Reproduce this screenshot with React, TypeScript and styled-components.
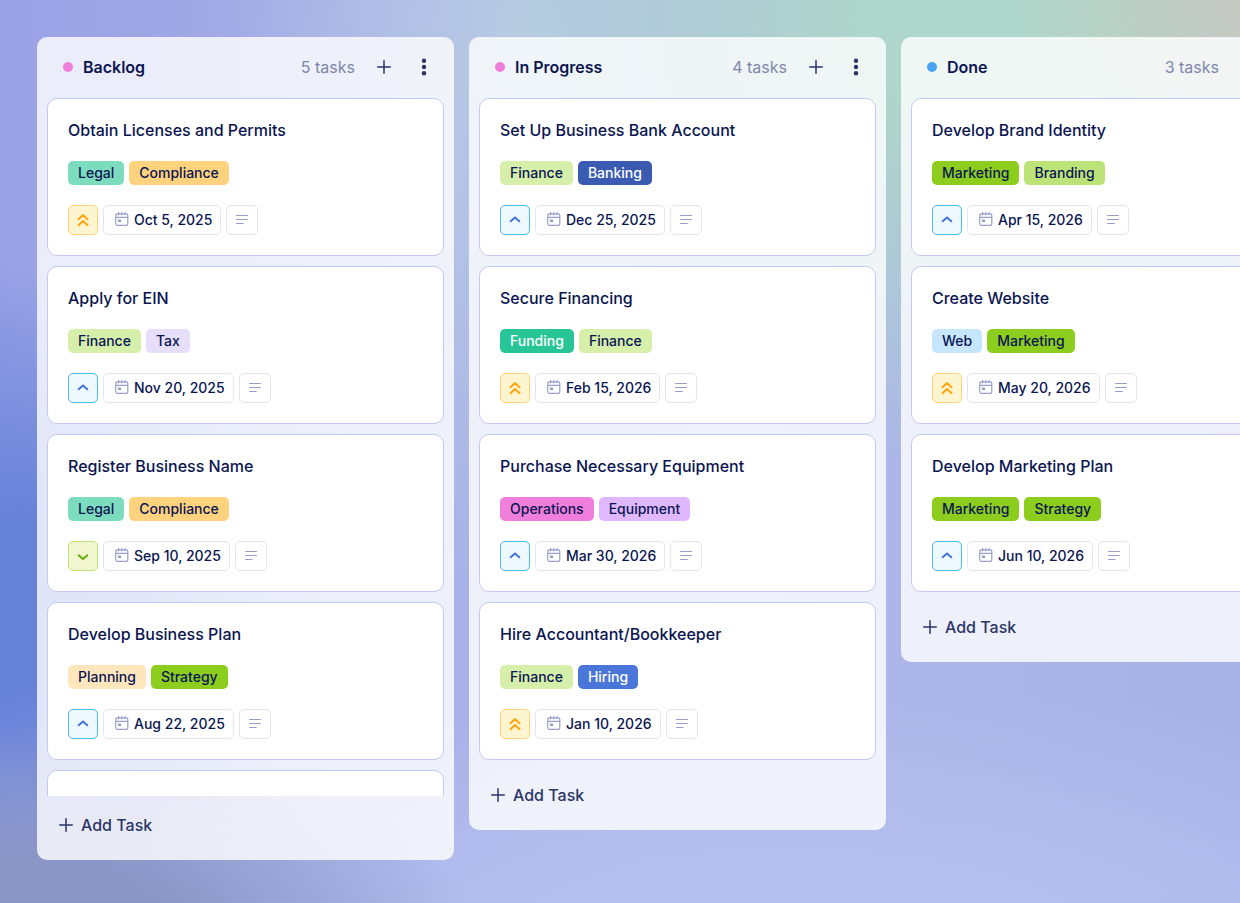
import React from "react";
import styled, { createGlobalStyle } from "styled-components";

const GlobalStyle = createGlobalStyle`
  *, *::before, *::after { box-sizing: border-box; }
  html, body { margin: 0; padding: 0; }
  body {
    font-family: "Inter", "Liberation Sans", sans-serif;
    color: #0a1551;
    overflow: hidden;
  }
  button { font-family: inherit; color: inherit; }
`;

type Priority = "high" | "medium" | "low";

interface Task {
  title: string;
  tags: string[];
  priority: Priority;
  date: string;
}

interface ColumnData {
  name: string;
  dot: string;
  count: number;
  tasks: Task[];
}

const tagColors: Record<string, { bg: string; fg?: string }> = {
  Legal: { bg: "#7edcbe" },
  Compliance: { bg: "#ffd27d" },
  Finance: { bg: "#d6efab" },
  Tax: { bg: "#e6defa" },
  Planning: { bg: "#ffe6bd" },
  Strategy: { bg: "#8dcd1e" },
  Banking: { bg: "#3a5bb1", fg: "#ffffff" },
  Funding: { bg: "#28c596", fg: "#ffffff" },
  Operations: { bg: "#f07edb" },
  Equipment: { bg: "#e0b8ff" },
  Hiring: { bg: "#4a76d9", fg: "#ffffff" },
  Marketing: { bg: "#8dcd1e" },
  Branding: { bg: "#bbe378" },
  Web: { bg: "#c6e5ff" },
};

const priorityColors: Record<Priority, { bg: string; border: string; icon: string }> = {
  high: { bg: "#fdf5cf", border: "#ffd27d", icon: "#ffa412" },
  medium: { bg: "#edf8ff", border: "#4db9fb", icon: "#4573e3" },
  low: { bg: "#f2f6ce", border: "#bbe378", icon: "#64ad12" },
};

const columns: ColumnData[] = [
  {
    name: "Backlog",
    dot: "#f07edb",
    count: 5,
    tasks: [
      { title: "Obtain Licenses and Permits", tags: ["Legal", "Compliance"], priority: "high", date: "Oct 5, 2025" },
      { title: "Apply for EIN", tags: ["Finance", "Tax"], priority: "medium", date: "Nov 20, 2025" },
      { title: "Register Business Name", tags: ["Legal", "Compliance"], priority: "low", date: "Sep 10, 2025" },
      { title: "Develop Business Plan", tags: ["Planning", "Strategy"], priority: "medium", date: "Aug 22, 2025" },
    ],
  },
  {
    name: "In Progress",
    dot: "#f07edb",
    count: 4,
    tasks: [
      { title: "Set Up Business Bank Account", tags: ["Finance", "Banking"], priority: "medium", date: "Dec 25, 2025" },
      { title: "Secure Financing", tags: ["Funding", "Finance"], priority: "high", date: "Feb 15, 2026" },
      { title: "Purchase Necessary Equipment", tags: ["Operations", "Equipment"], priority: "medium", date: "Mar 30, 2026" },
      { title: "Hire Accountant/Bookkeeper", tags: ["Finance", "Hiring"], priority: "high", date: "Jan 10, 2026" },
    ],
  },
  {
    name: "Done",
    dot: "#4aa3f2",
    count: 3,
    tasks: [
      { title: "Develop Brand Identity", tags: ["Marketing", "Branding"], priority: "medium", date: "Apr 15, 2026" },
      { title: "Create Website", tags: ["Web", "Marketing"], priority: "high", date: "May 20, 2026" },
      { title: "Develop Marketing Plan", tags: ["Marketing", "Strategy"], priority: "medium", date: "Jun 10, 2026" },
    ],
  },
];

const Board = styled.main`
  display: flex;
  align-items: flex-start;
  gap: 15px;
  min-height: 100vh;
  padding: 37px;
  overflow: hidden;
  background:
    radial-gradient(ellipse 38% 24% at 0% 104%, #8b96c6 35%, rgba(139, 150, 198, 0) 100%),
    radial-gradient(ellipse 26% 38% at 0% 67%, #6681d8 25%, rgba(102, 129, 216, 0) 100%),
    radial-gradient(ellipse 22% 22% at 104% 0%, #c6cac3 20%, rgba(198, 202, 195, 0) 100%),
    radial-gradient(ellipse 44% 50% at 80% 2%, #afd6ca 24%, rgba(175, 214, 202, 0) 100%),
    radial-gradient(ellipse 24% 60% at 42% 8%, #b7c8e5 10%, rgba(183, 200, 229, 0) 100%),
    radial-gradient(ellipse 75% 26% at 65% 102%, #b5bfef 20%, rgba(181, 191, 239, 0) 100%),
    linear-gradient(90deg, #9aa2e6 0%, #a5afe6 30%, #adb8e9 60%, #a8b1e5 100%);
`;

const Column = styled.section`
  display: flex;
  flex-direction: column;
  flex: 0 0 417px;
  max-height: calc(100vh - 80px);
  padding: 0 10px;
  border-radius: 10px;
  background: rgba(255, 255, 255, 0.8);
`;

const ColumnHeader = styled.header`
  display: flex;
  flex: none;
  align-items: center;
  height: 61px;
  padding: 0 9px 1px 16px;
`;

const Dot = styled.span<{ $color: string }>`
  width: 10px;
  height: 10px;
  margin-right: 10px;
  border-radius: 50%;
  background: ${(p) => p.$color};
`;

const ColumnTitle = styled.h2`
  flex: 1;
  margin: 0;
  font-size: 16px;
  line-height: 22px;
  font-weight: 600;
`;

const Count = styled.span`
  margin-right: 18px;
  font-size: 16px;
  line-height: 22px;
  color: #7e86ac;
`;

const IconButton = styled.button`
  display: grid;
  place-items: center;
  width: 22px;
  height: 24px;
  padding: 0;
  border: 0;
  background: none;
  color: #2b3568;
  cursor: pointer;

  & + & { margin-left: 18px; }
`;

const CardList = styled.ul`
  display: flex;
  flex-direction: column;
  flex: 0 1 auto;
  gap: 10px;
  min-height: 0;
  margin: 0;
  padding: 0 0 6px;
  list-style: none;
  overflow: hidden;
`;

const Card = styled.li`
  display: flex;
  flex: none;
  flex-direction: column;
  gap: 20px;
  min-height: 158px;
  padding: 20px;
  border: 1px solid #c3c9f0;
  border-radius: 10px;
  background: #ffffff;
`;

const CardTitle = styled.h3`
  margin: 0;
  font-size: 16px;
  line-height: 22px;
  font-weight: 450;
`;

const Row = styled.div`
  display: flex;
  gap: 5px;
`;

const Tag = styled.span<{ $bg: string; $fg?: string }>`
  padding: 0 10px;
  border-radius: 5px;
  background: ${(p) => p.$bg};
  color: ${(p) => p.$fg ?? "#0a1551"};
  font-size: 14px;
  line-height: 24px;
  font-weight: 450;
`;

const PriorityBadge = styled.button<{ $level: Priority }>`
  display: grid;
  place-items: center;
  width: 30px;
  height: 30px;
  padding: 0;
  border: 1px solid ${(p) => priorityColors[p.$level].border};
  border-radius: 5px;
  background: ${(p) => priorityColors[p.$level].bg};
  color: ${(p) => priorityColors[p.$level].icon};
  cursor: pointer;
`;

const Chip = styled.button`
  display: flex;
  align-items: center;
  justify-content: center;
  gap: 5px;
  min-width: 32px;
  height: 30px;
  padding: 0 8px;
  border: 1px solid #e2e3f5;
  border-radius: 5px;
  background: #ffffff;
  font-size: 14px;
  line-height: 20px;
  font-weight: 450;
  cursor: pointer;

  svg { color: #979dcb; }
`;

const DateChip = styled(Chip)`
  padding-left: 11px;
`;

const Footer = styled.footer`
  flex: none;
  height: 64px;
  padding: 18px 12px 0;
`;

const AddTask = styled.button`
  display: flex;
  align-items: center;
  gap: 8px;
  padding: 0;
  border: 0;
  background: none;
  color: #2b3568;
  font-size: 16px;
  line-height: 22px;
  font-weight: 500;
  cursor: pointer;
`;

const PlusIcon = () => (
  <svg width="14" height="14" viewBox="0 0 14 14" fill="none" stroke="currentColor" strokeWidth="1.5" strokeLinecap="round" aria-hidden="true">
    <path d="M7 .75v12.5M.75 7h12.5" />
  </svg>
);

const DotsIcon = () => (
  <svg width="6" height="18" viewBox="0 0 6 18" fill="currentColor" aria-hidden="true">
    <circle cx="3" cy="2.7" r="2.2" />
    <circle cx="3" cy="9" r="2.2" />
    <circle cx="3" cy="15.3" r="2.2" />
  </svg>
);

const PriorityIcon = ({ level }: { level: Priority }) => (
  <svg width="14" height="14" viewBox="0 0 14 14" fill="none" stroke="currentColor" strokeWidth="2" strokeLinecap="round" strokeLinejoin="round" aria-hidden="true">
    {level === "high" && <path d="M2.5 6.2 7 2l4.5 4.2M2.5 12.2 7 8l4.5 4.2" />}
    {level === "medium" && <path d="M2.7 8.2 7 4.4l4.3 3.8" />}
    {level === "low" && <path d="M2.7 6.2 7 10l4.3-3.8" />}
  </svg>
);

const CalendarIcon = () => (
  <svg width="14" height="16" viewBox="0 0 14 16" fill="none" stroke="currentColor" strokeWidth="1.2" strokeLinecap="round" aria-hidden="true">
    <rect x=".8" y="1.8" width="12" height="11.6" rx="1.6" />
    <path d="M1 5.3h11.6M3.6.6v2.2M6.8.6v2.2M10 .6v2.2" />
    <rect x="3" y="7.4" width="3" height="2.6" rx=".6" fill="currentColor" stroke="none" />
  </svg>
);

const LinesIcon = () => (
  <svg width="14" height="12" viewBox="0 0 14 12" fill="none" stroke="currentColor" strokeWidth="1.2" strokeLinecap="round" aria-hidden="true">
    <path d="M1.6 1.5h10.8M1.6 5.5h10.8M1.6 9.5h6.6" />
  </svg>
);

const TaskCard = ({ task }: { task: Task }) => (
  <Card>
    <CardTitle>{task.title}</CardTitle>
    <Row>
      {task.tags.map((tag) => (
        <Tag key={tag} $bg={tagColors[tag].bg} $fg={tagColors[tag].fg}>
          {tag}
        </Tag>
      ))}
    </Row>
    <Row>
      <PriorityBadge $level={task.priority} type="button" aria-label={`Priority: ${task.priority}`}>
        <PriorityIcon level={task.priority} />
      </PriorityBadge>
      <DateChip type="button">
        <CalendarIcon />
        {task.date}
      </DateChip>
      <Chip type="button" aria-label="Description">
        <LinesIcon />
      </Chip>
    </Row>
  </Card>
);

export default function App() {
  return (
    <>
      <GlobalStyle />
      <Board>
        {columns.map((column) => (
          <Column key={column.name}>
            <ColumnHeader>
              <Dot $color={column.dot} />
              <ColumnTitle>{column.name}</ColumnTitle>
              <Count>{column.count} tasks</Count>
              <IconButton type="button" aria-label={`Add task to ${column.name}`}>
                <PlusIcon />
              </IconButton>
              <IconButton type="button" aria-label={`${column.name} options`}>
                <DotsIcon />
              </IconButton>
            </ColumnHeader>
            <CardList>
              {column.tasks.map((task) => (
                <TaskCard key={task.title} task={task} />
              ))}
              {column.count > column.tasks.length && <Card />}
            </CardList>
            <Footer>
              <AddTask type="button">
                <PlusIcon />
                Add Task
              </AddTask>
            </Footer>
          </Column>
        ))}
      </Board>
    </>
  );
}
